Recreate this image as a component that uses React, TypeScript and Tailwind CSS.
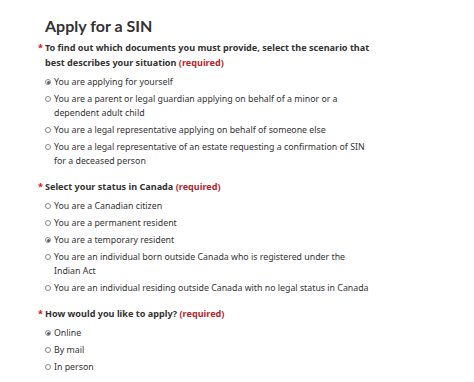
import React from 'react'

type Question = {
  label: string
  options: string[]
  checked: number
}

const questions: Question[] = [
  {
    label: 'To find out which documents you must provide, select the scenario that best describes your situation',
    options: [
      'You are applying for yourself',
      'You are a parent or legal guardian applying on behalf of a minor or a dependent adult child',
      'You are a legal representative applying on behalf of someone else',
      'You are a legal representative of an estate requesting a confirmation of SIN for a deceased person',
    ],
    checked: 0,
  },
  {
    label: 'Select your status in Canada',
    options: [
      'You are a Canadian citizen',
      'You are a permanent resident',
      'You are a temporary resident',
      'You are an individual born outside Canada who is registered under the Indian Act',
      'You are an individual residing outside Canada with no legal status in Canada',
    ],
    checked: 2,
  },
  {
    label: 'How would you like to apply?',
    options: ['Online', 'By mail', 'In person'],
    checked: 0,
  },
]

function Radio({ on }: { on: boolean }) {
  return (
    <span className="mt-[4px] flex h-[6px] w-[6px] shrink-0 items-center justify-center rounded-full border border-[#8a8a8a] bg-white">
      {on && <span className="h-[3px] w-[3px] rounded-full bg-[#4a5f80]" />}
    </span>
  )
}

export default function App() {
  return (
    <div className="min-h-[382px] w-[474px] bg-white pl-[45px] pt-[16px] text-[#333333] font-['Noto_Sans',sans-serif]">
      <h1 className="text-[16px] leading-[20px] font-bold text-[#333333] font-['Lato',sans-serif]">Apply for a SIN</h1>

      <div className="mt-[4px] flex flex-col gap-[11px]">
        {questions.map((q, qi) => (
          <div key={qi} className="w-[332px]">
            <div className="text-[9.1px] leading-[15px] font-bold">
              <span className="-ml-[7px] mr-[2px] text-[#d3080c]">*</span>
              {q.label} <span className="text-[#b3262c]">(required)</span>
            </div>
            <div className="mt-[5px] flex flex-col gap-[3px]">
              {q.options.map((opt, i) => (
                <label key={i} className="flex items-start gap-[3px] text-[8.8px] leading-[14px]">
                  <Radio on={i === q.checked} />
                  <span className="w-[318px]">{opt}</span>
                </label>
              ))}
            </div>
          </div>
        ))}
      </div>
    </div>
  )
}
